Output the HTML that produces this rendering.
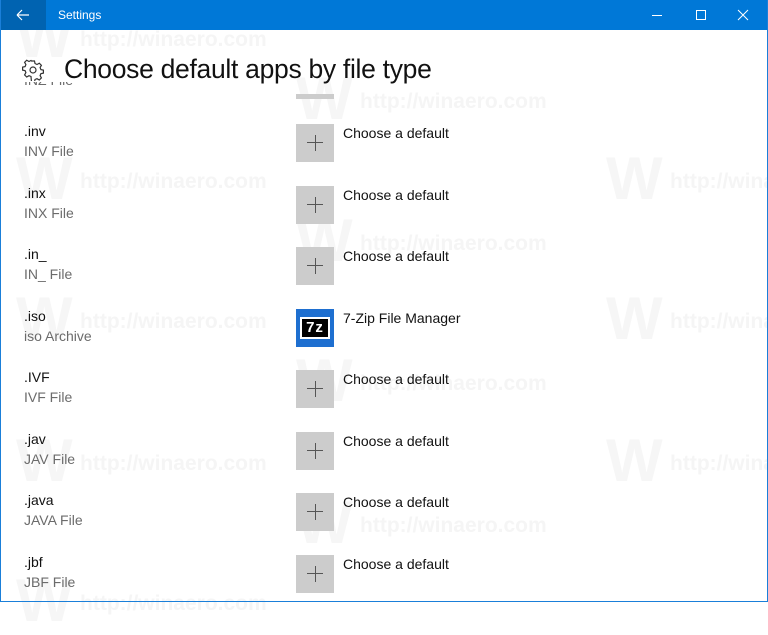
<!DOCTYPE html>
<html><head><style>
*{margin:0;padding:0;box-sizing:border-box}
body{width:768px;height:602px;overflow:hidden;background:#fff;font-family:"Segoe UI","Liberation Sans",sans-serif;position:relative}
.win{position:absolute;left:0;top:0;width:768px;height:602px;border:1px solid #1a7fd9;border-top:none}
.tb{position:absolute;left:0;top:0;width:768px;height:30px;background:#0078d7;color:#fff}
.back{position:absolute;left:0;top:0;width:46px;height:30px;background:#0063b1}
.tb .t{position:absolute;left:58px;top:8px;font-size:12px}
.wm{position:absolute;color:#f5f5f5;font-weight:bold;font-size:21px;font-family:"Liberation Sans",sans-serif;white-space:nowrap}
.wm b{font-size:60px;position:absolute;left:-64px;top:-26px;color:#f6f6f6}
h1{position:absolute;left:64px;top:54px;font-weight:300;font-size:26.5px;color:#111;font-family:"Liberation Sans",sans-serif;letter-spacing:-0.3px}
.ext{position:absolute;left:24px;font-size:14px;color:#111}
.ft{position:absolute;left:24px;font-size:14px;color:#6b6b6b}
.box{position:absolute;left:296px;width:38px;height:38px;background:#cccccc}
.box:before{content:"";position:absolute;left:11px;top:18px;width:16px;height:1px;background:#555}
.box:after{content:"";position:absolute;left:18.5px;top:11px;width:1px;height:16px;background:#555}
.lab{position:absolute;left:343px;font-size:14px;color:#111}
</style></head><body>
<div class="wm" style="left:80px;top:28px"><b>W</b>http://winaero.com</div>
<div class="wm" style="left:360px;top:90px"><b>W</b>http://winaero.com</div>
<div class="wm" style="left:80px;top:170px"><b>W</b>http://winaero.com</div>
<div class="wm" style="left:670px;top:170px"><b>W</b>http://winaero.com</div>
<div class="wm" style="left:360px;top:232px"><b>W</b>http://winaero.com</div>
<div class="wm" style="left:80px;top:310px"><b>W</b>http://winaero.com</div>
<div class="wm" style="left:670px;top:310px"><b>W</b>http://winaero.com</div>
<div class="wm" style="left:360px;top:372px"><b>W</b>http://winaero.com</div>
<div class="wm" style="left:80px;top:452px"><b>W</b>http://winaero.com</div>
<div class="wm" style="left:670px;top:452px"><b>W</b>http://winaero.com</div>
<div class="wm" style="left:360px;top:514px"><b>W</b>http://winaero.com</div>
<div class="wm" style="left:80px;top:592px"><b>W</b>http://winaero.com</div>
<div class="tb"><div class="back"><svg width="46" height="30"><path d="M17 15h12M17 15l5-5M17 15l5 5" stroke="#fff" stroke-width="1.2" fill="none"/></svg></div><span class="t">Settings</span>
<svg style="position:absolute;left:640px;top:0" width="128" height="30"><path d="M12 15.5h10" stroke="#fff"/><rect x="56.5" y="10.5" width="9" height="9" stroke="#fff" fill="none"/><path d="M98 10l10 10M108 10l-10 10" stroke="#fff"/></svg></div>
<svg style="position:absolute;left:22px;top:59px" width="22" height="22" viewBox="0 0 22 22"><g fill="none" stroke="#333" stroke-width="1.2"><circle cx="11" cy="11" r="3"/><path d="M9.5 2h3l.5 2.5 2 1 2.3-1.3 2.1 2.1-1.3 2.3.8 2 2.5.5v3l-2.5.5-.8 2 1.3 2.3-2.1 2.1-2.3-1.3-2 .8-.5 2.5h-3L9 17.5l-2-.8-2.3 1.3-2.1-2.1L3.9 13.6l-.8-2L.6 11.1v-3l2.5-.5.8-2L2.6 3.3l2.1-2.1 2.3 1.3 2-1z"/></g></svg>
<h1>Choose default apps by file type</h1>
<div class="ft" style="top:82px;height:8px;overflow:hidden"><div style="margin-top:-10px">INZ File</div></div>
<div style="position:absolute;left:296px;top:94px;width:38px;height:5px;background:#ccc"></div>
<div class="ext" style="top:123px">.inv</div><div class="ft" style="top:143px">INV File</div><div class="box" style="top:124px"></div><div class="lab" style="top:125px">Choose a default</div>
<div class="ext" style="top:185px">.inx</div><div class="ft" style="top:205px">INX File</div><div class="box" style="top:186px"></div><div class="lab" style="top:187px">Choose a default</div>
<div class="ext" style="top:246px">.in_</div><div class="ft" style="top:266px">IN_ File</div><div class="box" style="top:247px"></div><div class="lab" style="top:248px">Choose a default</div>
<div class="ext" style="top:308px">.iso</div><div class="ft" style="top:328px">iso Archive</div>
<div style="position:absolute;left:296px;top:309px;width:38px;height:38px;background:#1e6fd0"><div style="position:absolute;left:4px;top:8px;width:30px;height:22px;background:#fff;padding:2px"><div style="background:#000;color:#fff;height:18px;font:bold 15px/18px 'Liberation Sans',sans-serif;text-align:center;letter-spacing:1px">7z</div></div></div>
<div class="lab" style="top:310px">7-Zip File Manager</div>
<div class="ext" style="top:369px">.IVF</div><div class="ft" style="top:389px">IVF File</div><div class="box" style="top:370px"></div><div class="lab" style="top:371px">Choose a default</div>
<div class="ext" style="top:431px">.jav</div><div class="ft" style="top:451px">JAV File</div><div class="box" style="top:432px"></div><div class="lab" style="top:433px">Choose a default</div>
<div class="ext" style="top:492px">.java</div><div class="ft" style="top:512px">JAVA File</div><div class="box" style="top:493px"></div><div class="lab" style="top:494px">Choose a default</div>
<div class="ext" style="top:554px">.jbf</div><div class="ft" style="top:574px">JBF File</div><div class="box" style="top:555px"></div><div class="lab" style="top:556px">Choose a default</div>
<div class="win"></div>
</body></html>
